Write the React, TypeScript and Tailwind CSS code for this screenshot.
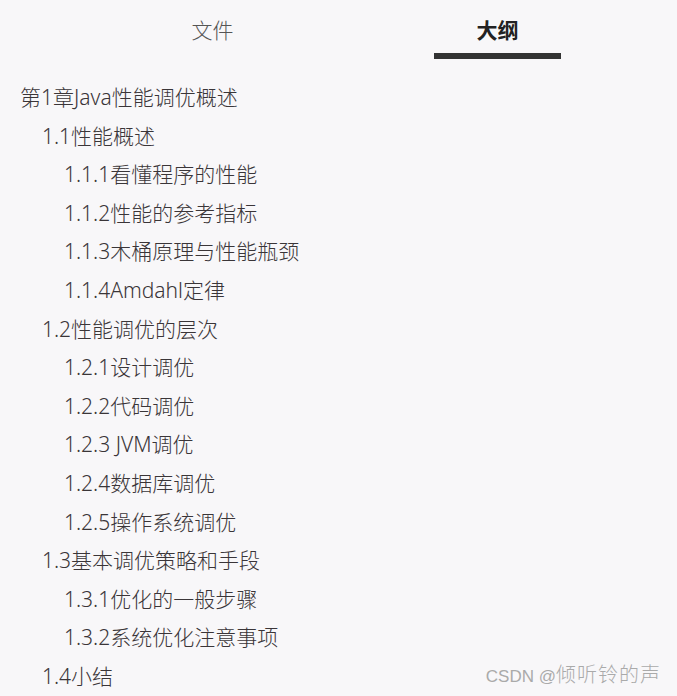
const items: { level: number; text: string }[] = [
  { level: 0, text: "第1章Java性能调优概述" },
  { level: 1, text: "1.1性能概述" },
  { level: 2, text: "1.1.1看懂程序的性能" },
  { level: 2, text: "1.1.2性能的参考指标" },
  { level: 2, text: "1.1.3木桶原理与性能瓶颈" },
  { level: 2, text: "1.1.4Amdahl定律" },
  { level: 1, text: "1.2性能调优的层次" },
  { level: 2, text: "1.2.1设计调优" },
  { level: 2, text: "1.2.2代码调优" },
  { level: 2, text: "1.2.3 JVM调优" },
  { level: 2, text: "1.2.4数据库调优" },
  { level: 2, text: "1.2.5操作系统调优" },
  { level: 1, text: "1.3基本调优策略和手段" },
  { level: 2, text: "1.3.1优化的一般步骤" },
  { level: 2, text: "1.3.2系统优化注意事项" },
  { level: 1, text: "1.4小结" },
];

const indent = ["pl-[20px]", "pl-[42px]", "pl-[64px]"];

export default function App() {
  return (
    <div
      className="relative w-[677px] h-[696px] overflow-hidden bg-[#f8f7f9] text-[#3a3538]"
      style={{ fontFamily: '"Noto Sans", "Noto Sans CJK SC", sans-serif' }}
    >
      {/* TABS */}
      <div className="flex pl-[70px] h-[59px]">
        <div className="w-[285px] flex justify-center pt-[14px]">
          <span className="text-[21px] leading-[32px] font-light text-[#555]">文件</span>
        </div>
        <div className="w-[285px] flex flex-col items-center pt-[14px]">
          <span className="text-[21px] leading-[32px] font-bold text-[#222]">大纲</span>
          <div className="mt-[7px] w-[127px] h-[6px] bg-[#333]" />
        </div>
      </div>

      {/* OUTLINE */}
      <ul className="pt-[19px]">
        {items.map((it, i) => (
          <li
            key={i}
            className={`${indent[it.level]} text-[21px] leading-[38.6px] font-light whitespace-nowrap`}
          >
            {it.text}
          </li>
        ))}
      </ul>

      <div
        className="absolute right-[16px] bottom-[6px] text-[17px] text-[#aaaaaa] flex items-baseline"
        style={{ fontFamily: '"Liberation Sans", "Noto Sans CJK SC", sans-serif' }}
      >
        <span>CSDN @</span>
        <span className="text-[20px] font-light tracking-[1px]">倾听铃的声</span>
      </div>
    </div>
  );
}
